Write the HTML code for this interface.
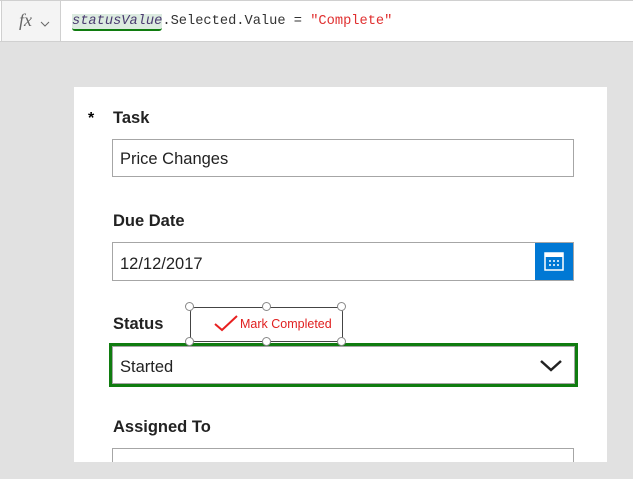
<!DOCTYPE html>
<html><head><style>
body{margin:0;width:633px;height:479px;background:#e1e1e1;position:relative;overflow:hidden;font-family:"Segoe UI","Liberation Sans",sans-serif;}
.top{position:absolute;left:0;top:0;width:633px;height:42px;background:#fff;border-bottom:1px solid #d0d0d0;border-top:1px solid #d0d0d0;box-sizing:border-box}
.fx{position:absolute;left:1px;top:1px;width:60px;height:40px;background:#f4f4f4;border-right:1px solid #d0d0d0;border-left:1px solid #d0d0d0;box-sizing:border-box}
.code{position:absolute;left:72px;top:14px;font-family:"Liberation Mono",monospace;font-size:13.7px;color:#333}
.card{position:absolute;left:74px;top:87px;width:533px;height:375px;background:#fff}
.lbl{position:absolute;left:113px;font-size:16.5px;font-weight:bold;color:#222}
.inp{position:absolute;left:112px;width:462px;border:1px solid #a6a6a6;box-sizing:border-box;background:#fff;font-size:16.5px;color:#222;padding-left:7px}
.h{position:absolute;width:9px;height:9px;border-radius:50%;background:#fff;border:1px solid #888;box-sizing:border-box}
</style></head><body>
<div class="top"></div>
<div class="fx"><span style="position:absolute;left:17px;top:9px;font-family:'Liberation Serif',serif;font-style:italic;font-size:18px;color:#666">fx</span><svg style="position:absolute;left:38px;top:20px" width="10" height="6"><path d="M1 1 L5 5 L9 1" stroke="#666" fill="none"/></svg></div>
<div class="code"><span style="background:#dcebe0;font-style:italic;color:#4a3a70;border-bottom:2px solid #107c10;border-radius:0 0 3px 3px">statusValue</span>.Selected.Value = <span style="color:#e03030">"Complete"</span></div>
<div class="card"></div>
<div style="position:absolute;left:88px;top:110px;font-size:16px;font-weight:bold">*</div>
<div class="lbl" style="top:109px">Task</div>
<div class="inp" style="top:139px;height:38px;line-height:39px">Price Changes</div>
<div class="lbl" style="top:212px">Due Date</div>
<div class="inp" style="top:242px;height:39px;line-height:42px">12/12/2017
<div style="position:absolute;right:0;top:0;width:38px;height:37px;background:#0078d4"><svg style="position:absolute;left:9px;top:9px" width="20" height="19"><rect x="1" y="1" width="18" height="17" fill="none" stroke="#fff" stroke-width="1.5"/><rect x="1" y="1" width="18" height="4" fill="#fff"/><path d="M6 8v2M10 8v2M14 8v2M6 12v2M10 12v2M14 12v2" stroke="#fff" stroke-width="1.5"/></svg></div></div>
<div class="lbl" style="top:315px">Status</div>
<div style="position:absolute;left:109px;top:343px;width:469px;height:44px;border:3px solid #107c10;box-sizing:border-box;background:#fff"><div style="position:absolute;inset:0;border:1px solid #a6a6a6"></div><span style="position:absolute;left:8px;top:12px;font-size:16.5px;color:#222">Started</span><svg style="position:absolute;right:12px;top:13px" width="24" height="14"><path d="M2 2 L12 11 L22 2" stroke="#222" stroke-width="2.5" fill="none"/></svg></div>
<div style="position:absolute;left:190px;top:307px;width:153px;height:35px;border:1px solid #444;border-radius:5px;background:#fff;box-sizing:border-box"><svg style="position:absolute;left:22px;top:6px" width="26" height="18"><path d="M2 10 L9 16 L24 2" stroke="#e82020" stroke-width="2" fill="none"/></svg><span style="position:absolute;left:49px;top:9px;font-size:12.5px;color:#e02020">Mark Completed</span></div>
<div class="h" style="left:185px;top:302px"></div><div class="h" style="left:262px;top:302px"></div><div class="h" style="left:337px;top:302px"></div>
<div class="h" style="left:185px;top:337px"></div><div class="h" style="left:262px;top:337px"></div><div class="h" style="left:337px;top:337px"></div>
<div class="lbl" style="top:418px">Assigned To</div>
<div class="inp" style="top:448px;height:20px;border-bottom:none"></div>
<div style="position:absolute;left:0;top:462px;width:633px;height:17px;background:#e1e1e1"></div>
</body></html>
